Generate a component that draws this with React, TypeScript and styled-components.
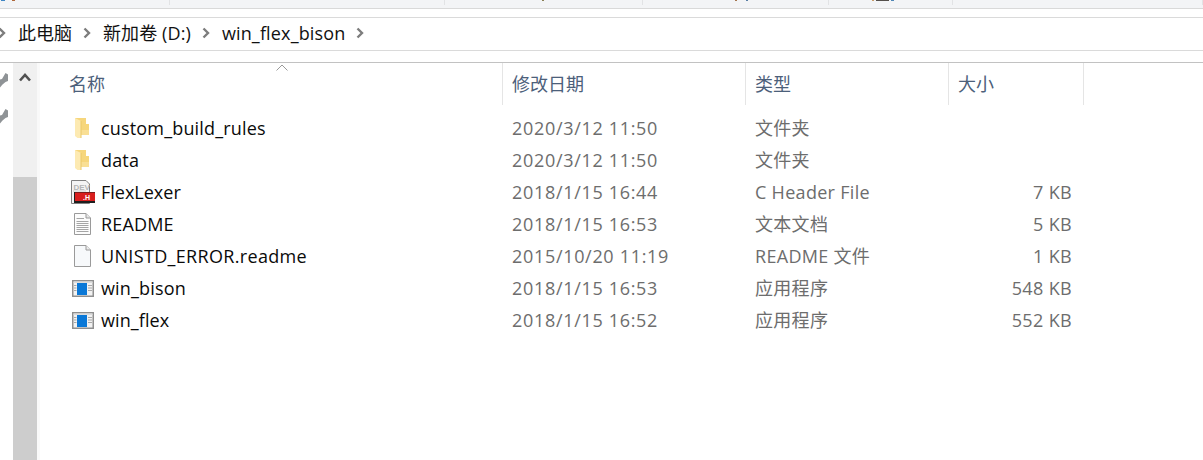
import React from "react";
import styled, { createGlobalStyle } from "styled-components";

const Global = createGlobalStyle`
  html, body { margin: 0; padding: 0; background: #fff; overflow: hidden; }
  #root { width: 1203px; height: 460px; overflow: hidden; }
`;

const UI = `"Open Sans", "Noto Sans CJK SC", "Noto Sans", sans-serif`;

const Page = styled.div`
  width: 1203px;
  height: 460px;
  display: flex;
  flex-direction: column;
  font-family: ${UI};
  font-size: 18px;
  background: #fff;
  color: #0a0a0a;
`;

const Ribbon = styled.div`
  height: 8px;
  flex: none;
  background: #f3f4f6;
  border-bottom: 1px solid #d9d9d9;
  display: grid;
  grid-template-columns: 170px 275px 198px 186px 124px 1fr;
  position: relative;
`;

const RibbonCell = styled.div`
  height: 5px;
  border-right: 1px solid #e2e3e5;
  &:last-child { border-right: 0; }
`;

const RibbonTicks = styled.svg`
  position: absolute;
  left: 0;
  top: 0;
`;

const Spacer = styled.div`
  height: 8px;
  flex: none;
  border-bottom: 1px solid #dadada;
`;

const AddressBar = styled.div`
  height: 30px;
  padding-bottom: 2px;
  flex: none;
  border-bottom: 1px solid #dadada;
  display: flex;
  align-items: center;
`;

const Crumb = styled.span<{ $spacing?: number }>`
  font-size: 18px;
  line-height: 30px;
  color: #111;
  margin: 0 11px 0 12px;
  white-space: nowrap;
  letter-spacing: ${(p) => p.$spacing ?? 0}px;
`;

const Chevron = () => (
  <svg width="8" height="12" viewBox="0 0 8 12" style={{ flex: "none" }}>
    <path d="M1.5 1.5 L6 6 L1.5 10.5" fill="none" stroke="#7d7d7d" strokeWidth="2.4" />
  </svg>
);

const FirstChevron = styled.span`
  display: flex;
  width: 6px;
  overflow: hidden;
  justify-content: flex-end;
`;

const Gap = styled.div`
  height: 11px;
  flex: none;
  border-bottom: 1px solid #c2c2c2;
`;

const Body = styled.div`
  flex: 1;
  display: flex;
  min-height: 0;
`;

const PinColumn = styled.div`
  width: 13px;
  flex: none;
  display: flex;
  flex-direction: column;
  align-items: flex-start;
  padding-top: 9px;
  gap: 20px;
  overflow: hidden;
`;

const Pin = () => (
  <svg width="8" height="16" viewBox="0 0 8 16">
    <path d="M2 7 L5.5 1 L8 2.5 V9 L5.5 10 L2.5 12.5 L0 15.5 V7.5 Z" fill="#8f9396" />
  </svg>
);

const ScrollTrack = styled.div`
  width: 24px;
  flex: none;
  background: #f0f0f0;
  display: flex;
  flex-direction: column;
`;

const ScrollButton = styled.div`
  height: 114px;
  flex: none;
  display: flex;
  justify-content: center;
  padding-top: 10px;
  box-sizing: border-box;
`;

const ScrollThumb = styled.div`
  flex: 1;
  background: #cdcdcd;
`;

const Divider = styled.div`
  width: 3px;
  flex: none;
  background: #f9f9f9;
`;

const List = styled.div`
  flex: 1;
  min-width: 0;
`;

const Columns = "463px 243px 203px 135px";

const Header = styled.div`
  display: grid;
  grid-template-columns: ${Columns};
  height: 40px;
  margin-bottom: 9px;
  position: relative;
`;

const HeaderCell = styled.div<{ $pad: number }>`
  padding-left: ${(p) => p.$pad}px;
  border-right: 1px solid #e5e5e5;
  font-size: 18px;
  line-height: 42px;
  color: #4c607a;
  white-space: nowrap;
`;

const SortArrow = styled.svg`
  position: absolute;
  left: 236px;
  top: 1px;
`;

const Row = styled.div`
  display: grid;
  grid-template-columns: ${Columns};
  height: 32px;
  line-height: 32px;
  align-items: center;
  white-space: nowrap;
`;

const NameCell = styled.div<{ $spacing: number }>`
  display: flex;
  align-items: center;
  padding-left: 30px;
  color: #0a0a0a;
  letter-spacing: ${(p) => p.$spacing}px;
`;

const IconBox = styled.span`
  width: 24px;
  height: 24px;
  margin-right: 7px;
  flex: none;
  display: flex;
  align-items: center;
  justify-content: center;
`;

const DateCell = styled.div`
  padding-left: 9px;
  color: #6d6d6d;
  letter-spacing: 0.68px;
`;

const TypeCell = styled.div`
  padding-left: 9px;
  color: #6d6d6d;
  letter-spacing: 0.3px;
`;

const SizeCell = styled.div`
  padding-right: 12px;
  text-align: right;
  color: #6d6d6d;
  letter-spacing: 0.35px;
`;

const FolderIcon = () => (
  <svg width="24" height="24" viewBox="0 0 24 24">
    <path d="M5 2 H16 V8 H19 V19 H8 Z" fill="#f6d67c" />
    <path d="M11 14 H19 V19 H11 Z" fill="#f9df95" />
    <path d="M5 2 L11 5 V22 H7.5 L5 20 Z" fill="#fdeab2" />
    <path d="M11 5 V22" stroke="#eac868" strokeWidth="1" />
  </svg>
);

const HeaderIconText = styled.text<{ $fill: string; $size: number }>`
  font-family: "Liberation Sans", sans-serif;
  font-weight: 700;
  font-size: ${(p) => p.$size}px;
  fill: ${(p) => p.$fill};
`;

const HeaderIcon = () => (
  <svg width="24" height="24" viewBox="0 0 24 24" style={{ flex: "none", marginLeft: 2 }}>
    <path d="M0.5 0.5 H15 L18.5 4 V23.5 H0.5 Z" fill="#f4f4f4" stroke="#808080" />
    <HeaderIconText $fill="#b5b5b5" $size={8} x="2.5" y="9.5">DEV</HeaderIconText>
    <rect x="2" y="10.5" width="13" height="1" fill="#cfcfcf" />
    <rect x="3" y="12" width="21" height="11" fill="#1e1e1e" />
    <rect x="4" y="12.5" width="20" height="8.5" fill="#d81e1e" />
    <HeaderIconText $fill="#fff" $size={7} x="12" y="20">.H</HeaderIconText>
  </svg>
);

const TextDocIcon = () => (
  <svg width="24" height="24" viewBox="0 0 24 24">
    <path d="M4.5 1.5 H16 L20.5 6 V22.5 H4.5 Z" fill="#fcfcfc" stroke="#9a9a9a" />
    <path d="M16 1.5 V6 H20.5" fill="#e6e6e6" stroke="#9a9a9a" />
    <path d="M6.5 6.5 H14 M6.5 9.5 H18.5 M6.5 11.5 H18.5 M6.5 13.5 H18.5 M6.5 15.5 H18.5 M6.5 17.5 H18.5 M6.5 19.5 H18.5" stroke="#a5a5a5" />
  </svg>
);

const BlankDocIcon = () => (
  <svg width="24" height="24" viewBox="0 0 24 24">
    <path d="M4.5 1.5 H16 L20.5 6 V22.5 H4.5 Z" fill="#f7f9fb" stroke="#9a9a9a" />
    <path d="M16 1.5 V6 H20.5" fill="#ececec" stroke="#9a9a9a" />
  </svg>
);

const ExeIcon = () => (
  <svg width="24" height="24" viewBox="0 0 24 24">
    <rect x="2" y="4" width="22" height="17" fill="#8f8f8f" />
    <rect x="3.5" y="5.5" width="19" height="14" fill="#f2f2f2" />
    <rect x="3.5" y="5.5" width="19" height="1.5" fill="#dcdcdc" />
    <rect x="7" y="7" width="10" height="12" fill="#0a78d7" />
    <path d="M4 9.5 H6.5 M4 12 H6.5 M4 14.5 H6.5 M18 9.5 H22 M18 12 H22 M18 14.5 H22" stroke="#a8a8a8" />
  </svg>
);

type File = {
  icon: React.ReactNode;
  name: string;
  spacing: number;
  date: string;
  type: string;
  size: string;
};

const files: File[] = [
  { icon: <FolderIcon />, name: "custom_build_rules", spacing: 0.17, date: "2020/3/12 11:50", type: "文件夹", size: "" },
  { icon: <FolderIcon />, name: "data", spacing: 0.17, date: "2020/3/12 11:50", type: "文件夹", size: "" },
  { icon: <HeaderIcon />, name: "FlexLexer", spacing: 0, date: "2018/1/15 16:44", type: "C Header File", size: "7 KB" },
  { icon: <TextDocIcon />, name: "README", spacing: 0.17, date: "2018/1/15 16:53", type: "文本文档", size: "5 KB" },
  { icon: <BlankDocIcon />, name: "UNISTD_ERROR.readme", spacing: 0.33, date: "2015/10/20 11:19", type: "README 文件", size: "1 KB" },
  { icon: <ExeIcon />, name: "win_bison", spacing: 0.17, date: "2018/1/15 16:53", type: "应用程序", size: "548 KB" },
  { icon: <ExeIcon />, name: "win_flex", spacing: 0.1, date: "2018/1/15 16:52", type: "应用程序", size: "552 KB" },
];

export default function App() {
  return (
    <Page>
      <Global />
      <Ribbon>
        <RibbonCell />
        <RibbonCell />
        <RibbonCell />
        <RibbonCell />
        <RibbonCell />
        <RibbonCell />
        <RibbonTicks width="1203" height="3" viewBox="0 0 1203 3">
          <rect x="1" y="0" width="4" height="1" fill="#3f86c4" />
          <rect x="12" y="0" width="3" height="1" fill="#b0683a" />
          <rect x="542" y="0" width="2" height="1" fill="#8a7f55" />
          <rect x="735" y="0" width="2" height="1" fill="#a5754e" />
          <rect x="746" y="0" width="2" height="1" fill="#5a7fa5" />
          <rect x="872" y="0" width="2" height="1" fill="#c79a68" />
          <rect x="876" y="0" width="13" height="1" fill="#55504c" />
          <rect x="891" y="0" width="3" height="1" fill="#4f86b5" />
        </RibbonTicks>
      </Ribbon>
      <Spacer />
      <AddressBar>
        <FirstChevron><Chevron /></FirstChevron>
        <Crumb>此电脑</Crumb>
        <Chevron />
        <Crumb $spacing={0.1}>新加卷 (D:)</Crumb>
        <Chevron />
        <Crumb $spacing={0.15}>win_flex_bison</Crumb>
        <Chevron />
      </AddressBar>
      <Gap />
      <Body>
        <PinColumn>
          <Pin />
          <Pin />
        </PinColumn>
        <ScrollTrack>
          <ScrollButton>
            <svg width="12" height="9" viewBox="0 0 12 9">
              <path d="M1 7.5 L6 2 L11 7.5" fill="none" stroke="#505050" strokeWidth="2.6" />
            </svg>
          </ScrollButton>
          <ScrollThumb />
        </ScrollTrack>
        <Divider />
        <List>
          <Header>
            <HeaderCell $pad={29}>名称</HeaderCell>
            <HeaderCell $pad={9}>修改日期</HeaderCell>
            <HeaderCell $pad={9}>类型</HeaderCell>
            <HeaderCell $pad={9}>大小</HeaderCell>
            <SortArrow width="12" height="7" viewBox="0 0 12 7">
              <path d="M0.5 6.5 L6 1 L11.5 6.5" fill="none" stroke="#9a9a9a" />
            </SortArrow>
          </Header>
          {files.map((f) => (
            <Row key={f.name}>
              <NameCell $spacing={f.spacing}>
                <IconBox>{f.icon}</IconBox>
                {f.name}
              </NameCell>
              <DateCell>{f.date}</DateCell>
              <TypeCell>{f.type}</TypeCell>
              <SizeCell>{f.size}</SizeCell>
            </Row>
          ))}
        </List>
      </Body>
    </Page>
  );
}
